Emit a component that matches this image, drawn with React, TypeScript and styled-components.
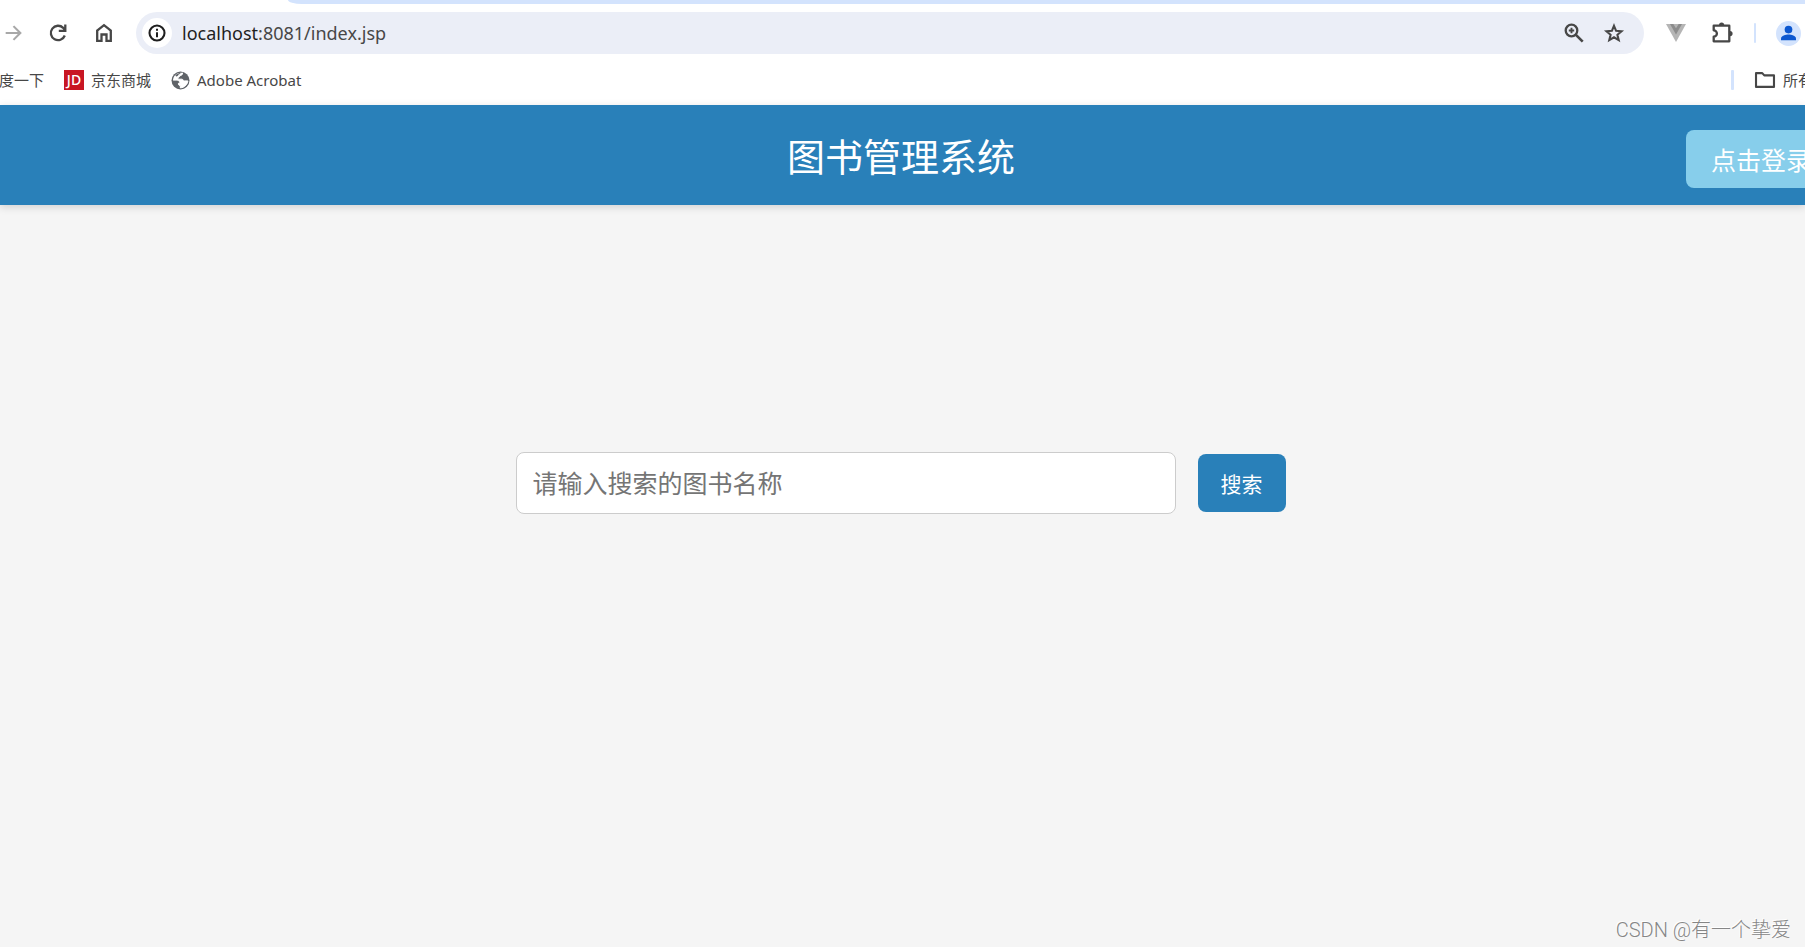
import React from "react";
import styled, { createGlobalStyle } from "styled-components";

const GlobalStyle = createGlobalStyle`
  *, *::before, *::after { box-sizing: border-box; }
  html, body, #root { height: 100%; }
  body {
    margin: 0;
    overflow: hidden;
    background: #f5f5f5;
    font-family: "Noto Sans", "Noto Sans CJK SC", sans-serif;
  }
  button, input { font: inherit; }
`;

const Page = styled.div`
  display: flex;
  flex-direction: column;
  min-height: 100%;
  overflow: hidden;
`;

const Chrome = styled.div`
  background: #fff;
`;

const TabStrip = styled.div`
  height: 4px;
  margin-left: 288px;
  background: #d3e3fd;
  border-bottom-left-radius: 14px 4px;
`;

const Toolbar = styled.div`
  display: flex;
  align-items: center;
  gap: 20px;
  height: 58px;
  padding: 0 4px 0 2px;
`;

const IconButton = styled.button<{ $color?: string }>`
  display: flex;
  flex: none;
  padding: 0;
  border: 0;
  background: none;
  color: ${(p) => p.$color ?? "#474747"};
`;

const IconGroup = styled.div`
  display: flex;
  align-items: center;
  gap: 22px;
`;

const AddressBar = styled.div`
  display: flex;
  flex: 1;
  align-items: center;
  gap: 10px;
  height: 42px;
  padding: 0 18px 0 6px;
  border-radius: 21px;
  background: #ebeef7;
`;

const SiteInfo = styled(IconButton)`
  align-items: center;
  justify-content: center;
  width: 30px;
  height: 30px;
  border-radius: 50%;
  background: #fff;
`;

const Url = styled.div`
  flex: 1;
  color: #474747;
  font-size: 18px;
  line-height: 24px;
  span { color: #1f1f1f; }
`;

const AddressActions = styled.div`
  display: flex;
  gap: 16px;
`;

const Divider = styled.span<{ $wide?: boolean }>`
  flex: none;
  width: ${(p) => (p.$wide ? 3 : 2)}px;
  height: 20px;
  border-radius: 1px;
  background: #d3e3fd;
`;

const Avatar = styled(IconButton)`
  align-items: center;
  justify-content: center;
  width: 25px;
  height: 25px;
  border-radius: 50%;
  background: #d3e3fd;
`;

const Bookmarks = styled.nav`
  display: flex;
  align-items: center;
  gap: 20px;
  height: 43px;
  padding-bottom: 7px;
  overflow: hidden;
`;

const Bookmark = styled.a<{ $cut?: "start" | "end" }>`
  display: flex;
  flex: none;
  align-items: center;
  gap: 7px;
  margin-left: ${(p) => (p.$cut === "start" ? -1 : 0)}px;
  margin-right: ${(p) => (p.$cut === "end" ? -38 : 0)}px;
  color: #474747;
  font-size: 15px;
  line-height: 20px;
  text-decoration: none;
  white-space: nowrap;
`;

const JdBadge = styled.span`
  width: 20px;
  background: #c81623;
  color: #fff;
  font-size: 14px;
  font-weight: 500;
  line-height: 20px;
  text-align: center;
`;

const Spacer = styled.span`
  flex: 1;
`;

const Header = styled.header`
  display: grid;
  grid-template-columns: 1fr auto 1fr;
  align-items: center;
  height: 100px;
  padding-right: 3px;
  background: #2980b9;
  box-shadow: 0 2px 8px rgba(0, 0, 0, 0.15);
  color: #fff;
`;

const Title = styled.h1`
  grid-column: 2;
  margin: 0;
  padding-top: 2px;
  font-size: 38px;
  font-weight: 400;
  line-height: 50px;
`;

const Button = styled.button<{ $login?: boolean }>`
  flex: none;
  justify-self: end;
  height: 58px;
  margin-top: ${(p) => (p.$login ? 8 : 0)}px;
  margin-right: ${(p) => (p.$login ? -34 : 0)}px;
  padding: 0 ${(p) => (p.$login ? 25 : 23)}px;
  border: 0;
  border-radius: 8px;
  background: ${(p) => (p.$login ? "#87ceeb" : "#2980b9")};
  color: #fff;
  font-size: ${(p) => (p.$login ? 25 : 21)}px;
  white-space: nowrap;
`;

const Main = styled.main`
  display: flex;
  flex: 1;
  flex-direction: column;
  padding-top: 247px;
`;

const SearchForm = styled.form`
  display: flex;
  align-items: center;
  justify-content: center;
  gap: 22px;
  padding-right: 4px;
`;

const SearchInput = styled.input`
  width: 660px;
  height: 62px;
  padding: 0 16px;
  border: 1px solid #ccc;
  border-radius: 8px;
  background: #fff;
  font-size: 25px;
  &::placeholder { color: #757575; opacity: 1; }
`;

const Watermark = styled.footer`
  margin-top: auto;
  padding: 0 14px 4px;
  color: #868686;
  font-family: Roboto, "Noto Sans CJK SC", sans-serif;
  font-size: 20px;
  font-weight: 300;
  line-height: 26px;
  text-align: right;
  text-shadow: -1px -1px 0 #fff;
`;

const Svg = ({ size = 24, children }: { size?: number; children: React.ReactNode }) => (
  <svg width={size} height={size} viewBox="0 0 24 24" fill="none" stroke="currentColor" strokeWidth="2.3" aria-hidden="true">
    {children}
  </svg>
);

export default function App() {
  return (
    <Page>
      <GlobalStyle />
      <Chrome>
        <TabStrip />
        <Toolbar>
          <IconGroup>
            <IconButton aria-label="前进" $color="#a8a8a8">
              <Svg size={22}><path d="M4 12h16M12.500 4.500l7.500 7.500-7.500 7.500" /></Svg>
            </IconButton>
            <IconButton aria-label="重新加载">
              <Svg><path d="M18.800 14.500A7.200 7.200 0 1 1 17.200 6.900L19.300 9.500M19.300 3.500v6.300h-6.500" strokeWidth="2.300" /></Svg>
            </IconButton>
            <IconButton aria-label="主页">
              <Svg><path d="M5.200 19.800V9.500L12 4.200l6.800 5.300v10.300h-4.300v-6.300h-5v6.300z" strokeWidth="2.300" /></Svg>
            </IconButton>
          </IconGroup>
          <AddressBar>
            <SiteInfo aria-label="网站信息" $color="#1f1f1f">
              <Svg size={20}><circle cx="12" cy="12" r="9" strokeWidth="2.500" /><path d="M12 11v6M12 7v2.200" strokeWidth="2.400" /></Svg>
            </SiteInfo>
            <Url><span>localhost</span>:8081/index.jsp</Url>
            <AddressActions>
              <IconButton aria-label="缩放">
                <Svg><circle cx="9.500" cy="9.500" r="5.800" /><path d="M13.700 13.700l7 7" strokeWidth="2.600" /><path d="M9.500 6.800v5.400M6.800 9.500h5.400" strokeWidth="1.900" /></Svg>
              </IconButton>
              <IconButton aria-label="收藏">
                <Svg><path d="M12 4.800l2.100 5 5.400.5-4.100 3.500 1.300 5.300-4.700-2.800-4.700 2.800 1.300-5.300-4.100-3.500 5.400-.5z" strokeWidth="2.100" /></Svg>
              </IconButton>
            </AddressActions>
          </AddressBar>
          <IconGroup>
            <IconButton aria-label="Vue">
              <Svg><g stroke="none"><path d="M2 3h20L12 21z" fill="#b5b5b5" /><path d="M6 3h12l-6 10.500z" fill="#8c8c8c" /><path d="M9.300 3h5.400L12 7.300z" fill="#b5b5b5" /></g></Svg>
            </IconButton>
            <IconButton aria-label="扩展程序">
              <Svg><path d="M3.700 4.700h15.600v15.600H3.700v-4.600a3.200 3.200 0 0 0 0-6.400z" strokeLinejoin="round" /><path d="M9 4a2.600 2.600 0 0 1 5.200 0zM20 10a2.600 2.600 0 0 1 0 5.200z" fill="currentColor" stroke="none" /></Svg>
            </IconButton>
          </IconGroup>
          <Divider />
          <Avatar aria-label="个人资料" $color="#0b57d0">
            <Svg size={25}><g fill="currentColor" stroke="none"><circle cx="12" cy="8.200" r="3.700" /><path d="M4.800 18.500v-1.600c0-2.600 4.600-3.900 7.200-3.900s7.200 1.300 7.200 3.900v1.600z" /></g></Svg>
          </Avatar>
        </Toolbar>
        <Bookmarks>
          <Bookmark href="#" $cut="start">度一下</Bookmark>
          <Bookmark href="#"><JdBadge>JD</JdBadge>京东商城</Bookmark>
          <Bookmark href="#">
            <svg width="19" height="19" viewBox="0 0 19 19" aria-hidden="true">
              <circle cx="9.500" cy="9.500" r="9" fill="#5f6368" />
              <path d="M11.500 1.800c.3 1.900-.8 2.600-2.600 2.700-.2 1.300-.8 1.900-2 2.100l.1 1.600h3.900c1.100 0 1.300 1.600 2.700 1.700h3.300c-.3 3.400-3.200 6.600-7.600 7v-2.200c-1.500-.2-2-.9-1.900-2.400l1.700-.1c-.2-2.300-2.100-3.100-3.900-3.100H2.100" fill="none" stroke="#fff" strokeWidth="1" />
              <path d="M2.100 9.100h3.100c1.800 0 3.700.8 3.900 3.100l-1.700.1c-.1 1.500.4 2.200 1.900 2.400v2.200c4.400-.4 7.300-3.600 7.600-7h-3.300c-1.400-.1-1.600-1.700-2.700-1.700H7l-.1-1.600c1.200-.2 1.800-.8 2-2.100 1.800-.1 2.900-.8 2.600-2.700C6.500.8 2.100 4.600 2.100 9.100z" fill="#fff" />
              <path d="M4.300 4.800c1.200-1.700 3-2.700 5.200-2.700-.1 1.200-.9 1.200-1.900 1.500-.3 1.300-1 1.700-2.200 1.900z" fill="#5f6368" />
            </svg>
            Adobe Acrobat
          </Bookmark>
          <Spacer />
          <Divider $wide />
          <Bookmark href="#" $cut="end">
            <Svg size={22}><path d="M2.200 4.500h6.800l2.200 2.500h10.600v12.500H2.200z" strokeLinejoin="round" /></Svg>
            所有书签
          </Bookmark>
        </Bookmarks>
      </Chrome>
      <Header>
        <Title>图书管理系统</Title>
        <Button type="button" $login>点击登录</Button>
      </Header>
      <Main>
        <SearchForm onSubmit={(e) => e.preventDefault()}>
          <SearchInput type="text" aria-label="图书名称" placeholder="请输入搜索的图书名称" />
          <Button type="submit">搜索</Button>
        </SearchForm>
        <Watermark>CSDN @有一个挚爱</Watermark>
      </Main>
    </Page>
  );
}
